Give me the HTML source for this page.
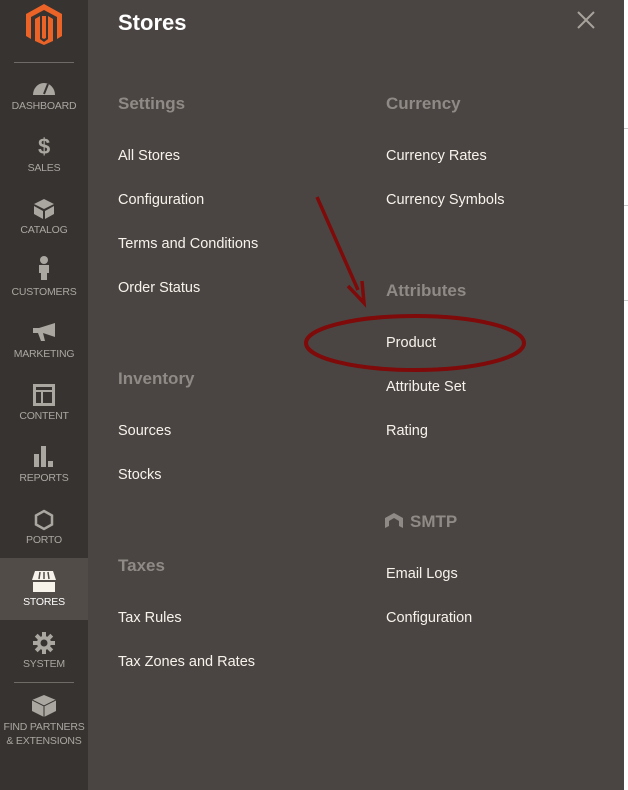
<!DOCTYPE html>
<html><head><meta charset="utf-8"><style>
*{margin:0;padding:0;box-sizing:border-box}
body{width:628px;height:790px;overflow:hidden;background:#fff;font-family:"Liberation Sans",sans-serif;position:relative}
#side{position:absolute;left:0;top:0;width:88px;height:790px;background:#373330}
#panel{position:absolute;left:88px;top:0;width:536px;height:790px;background:#4a4542}
.it{position:absolute;left:0;width:88px;text-align:center;color:#aaa6a0;font-size:10.5px;letter-spacing:-0.2px}
.it svg{position:absolute;left:50%;transform:translateX(-50%)}
.lbl{position:absolute;width:88px;left:0;text-align:center}
.t{position:absolute;color:#f7f3eb;font-size:14.5px;white-space:nowrap}
.h{position:absolute;color:#8f8a85;font-size:17px;font-weight:bold;white-space:nowrap}
</style></head><body>
<div id="side">
<svg style="position:absolute;left:26px;top:4px" width="36" height="41" viewBox="0 0 36 41"><path d="M18 0 L36 10 V32 L31 35 V13 L18 6 L5 13 V35 L0 32 V10 Z M9 15 L14 12 V35 L18 38 L22 35 V12 L27 15 V37 L18 41 L9 37 Z M14 14 V34" fill="#ec6327"/><path d="M14 11 L18 9 L22 11 V35 L18 37 L14 35Z" fill="#373330"/><path d="M16 12 h4 v22 l-2 1 l-2 -1z" fill="#ec6327"/></svg>
<div style="position:absolute;left:14px;top:62px;width:60px;height:1px;background:#6e6a66"></div>
<div style="position:absolute;left:0;top:558px;width:88px;height:62px;background:#514c48"></div>
<svg style="position:absolute;left:33px;top:78px" width="22" height="17"><path d="M0 17 A11 12 0 0 1 22 17 Z" fill="#aaa6a0"/><path d="M11 16 L15 6" stroke="#373330" stroke-width="2"/></svg>
<div class="lbl it" style="top:100px">DASHBOARD</div>
<div class="it" style="top:134px;font-size:22px;font-weight:bold">$</div>
<div class="lbl it" style="top:162px">SALES</div>
<svg style="position:absolute;left:34px;top:199px" width="20" height="20"><path d="M10 0 L20 5 L10 10 L0 5Z M0 7 L9 12 V20 L0 15Z M20 7 L11 12 V20 L20 15Z" fill="#aaa6a0"/></svg>
<div class="lbl it" style="top:224px">CATALOG</div>
<svg style="position:absolute;left:37px;top:256px" width="14" height="24"><circle cx="7" cy="4" r="4" fill="#aaa6a0"/><path d="M2 9 H12 V17 H10 V24 H4 V17 H2Z" fill="#aaa6a0"/></svg>
<div class="lbl it" style="top:286px">CUSTOMERS</div>
<svg style="position:absolute;left:33px;top:323px" width="22" height="19"><path d="M0 5 H6 L22 0 V14 L10 10 L12 18 H8 L5 10 H0Z" fill="#aaa6a0"/></svg>
<div class="lbl it" style="top:348px">MARKETING</div>
<svg style="position:absolute;left:33px;top:384px" width="22" height="22"><path d="M0 0H22V22H0Z M3 3V6H19V3Z M3 8V19H8V8Z M10 8V19H19V8Z" fill="#aaa6a0" fill-rule="evenodd"/></svg>
<div class="lbl it" style="top:410px">CONTENT</div>
<svg style="position:absolute;left:34px;top:446px" width="20" height="21"><rect x="0" y="8" width="5" height="13" fill="#aaa6a0"/><rect x="7" y="0" width="5" height="21" fill="#aaa6a0"/><rect x="14" y="15" width="5" height="6" fill="#aaa6a0"/></svg>
<div class="lbl it" style="top:472px">REPORTS</div>
<svg style="position:absolute;left:34px;top:509px" width="20" height="22"><path d="M10 2 L18 6.5 V15.5 L10 20 L2 15.5 V6.5Z" fill="none" stroke="#aaa6a0" stroke-width="2.5"/></svg>
<div class="lbl it" style="top:534px">PORTO</div>
<svg style="position:absolute;left:32px;top:571px" width="24" height="21"><path d="M3 0 H21 L24 9 H0Z" fill="#f7f3eb"/><path d="M8 1 L7 8 M12 1 V8 M16 1 L17 8" stroke="#514c48" stroke-width="1.5"/><rect x="1" y="11" width="22" height="10" fill="#f7f3eb"/></svg>
<div class="lbl it" style="top:596px;color:#fff">STORES</div>
<svg style="position:absolute;left:33px;top:632px" width="22" height="22" viewBox="0 0 22 22"><g fill="#aaa6a0"><circle cx="11" cy="11" r="7"/><rect x="9" y="0" width="4" height="22"/><rect x="0" y="9" width="22" height="4"/><rect x="9" y="0" width="4" height="22" transform="rotate(45 11 11)"/><rect x="9" y="0" width="4" height="22" transform="rotate(-45 11 11)"/></g><circle cx="11" cy="11" r="3.5" fill="#373330"/></svg>
<div class="lbl it" style="top:658px">SYSTEM</div>
<div style="position:absolute;left:14px;top:682px;width:60px;height:1px;background:#6e6a66"></div>
<svg style="position:absolute;left:32px;top:693px" width="24" height="24"><path d="M12 2 L24 7 V18 L12 24 L0 18 V7Z" fill="#aaa6a0"/><path d="M0 7 L12 13 L24 7 M12 13 V24" stroke="#373330" stroke-width="1" fill="none"/></svg>
<div class="lbl it" style="top:720px;line-height:14px">FIND PARTNERS<br>&amp; EXTENSIONS</div>
</div>
<div id="panel">
<div style="position:absolute;left:30px;top:10px;color:#fff;font-size:22px;font-weight:bold">Stores</div>
<svg style="position:absolute;left:489px;top:11px" width="18" height="18"><path d="M1 1L17 17M17 1L1 17" stroke="#a8a29c" stroke-width="2"/></svg>
</div>
<div class="h" style="left:118px;top:94px">Settings</div>
<div class="t" style="left:118px;top:148px">All Stores</div>
<div class="t" style="left:118px;top:192px">Configuration</div>
<div class="t" style="left:118px;top:236px">Terms and Conditions</div>
<div class="t" style="left:118px;top:280px">Order Status</div>
<div class="h" style="left:118px;top:369px">Inventory</div>
<div class="t" style="left:118px;top:423px">Sources</div>
<div class="t" style="left:118px;top:467px">Stocks</div>
<div class="h" style="left:118px;top:556px">Taxes</div>
<div class="t" style="left:118px;top:610px">Tax Rules</div>
<div class="t" style="left:118px;top:654px">Tax Zones and Rates</div>
<div class="h" style="left:386px;top:94px">Currency</div>
<div class="t" style="left:386px;top:148px">Currency Rates</div>
<div class="t" style="left:386px;top:192px">Currency Symbols</div>
<div class="h" style="left:386px;top:281px">Attributes</div>
<div class="t" style="left:386px;top:335px">Product</div>
<div class="t" style="left:386px;top:379px">Attribute Set</div>
<div class="t" style="left:386px;top:423px">Rating</div>
<svg style="position:absolute;left:385px;top:513px" width="18" height="16"><path d="M9 0 L18 5 V15 L14 13 V8 L9 5 L4 8 V13 L0 15 V5Z" fill="#8f8a85"/></svg>
<div class="h" style="left:410px;top:512px">SMTP</div>
<div class="t" style="left:386px;top:566px">Email Logs</div>
<div class="t" style="left:386px;top:610px">Configuration</div>
<div style="position:absolute;left:624px;top:128px;width:4px;height:1px;background:#ccc"></div>
<div style="position:absolute;left:624px;top:205px;width:4px;height:1px;background:#ccc"></div>
<div style="position:absolute;left:624px;top:300px;width:4px;height:1px;background:#ccc"></div>
<svg style="position:absolute;left:0;top:0" width="628" height="790"><path d="M317 197 L358 290" stroke="#7e0a0a" stroke-width="3.5"/><path d="M348 286 L364 303 L362 281" fill="none" stroke="#7e0a0a" stroke-width="3.5"/><ellipse cx="415" cy="343" rx="109" ry="27" fill="none" stroke="#7e0a0a" stroke-width="4"/></svg>
</body></html>
